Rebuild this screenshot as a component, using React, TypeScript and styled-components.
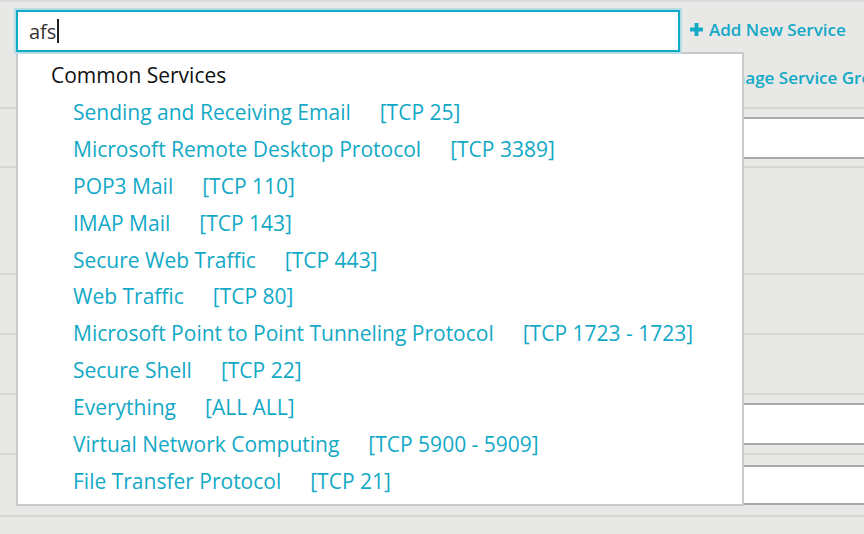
import styled, { createGlobalStyle } from 'styled-components'

const GlobalStyle = createGlobalStyle`
    html, body {
        margin: 0;
        padding: 0;
        background: #e8e8e6;
    }
    body {
        font-family: "Open Sans", Lato, sans-serif;
        overflow: hidden;
    }
`

const SPage = styled.div`
    position: relative;
    width: 864px;
    height: 534px;
    overflow: hidden;
    background: #e8e8e6;
    border-top: 2px solid #dcdcdc;
    box-sizing: border-box;
`

const SHeader = styled.div`
    height: 105px;
    display: flex;
    align-items: flex-start;
    padding: 8px 0 0 16px;
    box-sizing: border-box;
    gap: 10px;
`

const SSearchWrap = styled.div`
    position: relative;
    z-index: 3;
    width: 664px;
    flex: none;
`

const SSearch = styled.div`
    height: 42px;
    box-sizing: border-box;
    border: 2px solid #12a9c6;
    box-shadow: 0 0 0 2px #b6dce4;
    background: #fff;
    display: flex;
    align-items: center;
    padding-left: 11px;
    font-size: 20px;
    color: #333;
`

const SCaret = styled.span`
    display: inline-block;
    width: 2px;
    height: 24px;
    background: #222;
    margin-left: 1px;
`

const SActions = styled.div`
    display: flex;
    flex-direction: column;
    gap: 26px;
    padding-top: 8px;
`

const SAction = styled.a`
    display: flex;
    align-items: center;
    gap: 6px;
    color: #12a9c6;
    font-size: 17px;
    font-weight: 600;
    white-space: nowrap;
    text-decoration: none;
    height: 22px;
`

const SRow = styled.div<{ $h: number }>`
    height: ${p => p.$h}px;
    border-top: 2px solid #d6d6d5;
    display: flex;
    align-items: center;
    justify-content: flex-end;
`

const SField = styled.div<{ $h: number }>`
    width: 360px;
    height: ${p => p.$h}px;
    margin-right: -20px;
    background: #fff;
    border-top: 2px solid #a9a9a9;
    border-bottom: 2px solid #a9a9a9;
    box-sizing: border-box;
`

const SDropdown = styled.div`
    position: absolute;
    z-index: 2;
    left: 16px;
    top: 50px;
    width: 728px;
    height: 454px;
    box-sizing: border-box;
    background: #fff;
    border: 2px solid #c9c9c9;
    padding-top: 3px;
`

const SGroupTitle = styled.div`
    height: 37px;
    line-height: 37px;
    padding-left: 33px;
    font-size: 21px;
    color: #111;
`

const SOption = styled.div`
    height: 36.9px;
    line-height: 36.9px;
    padding-left: 55px;
    font-size: 21px;
    color: #12a9c6;
    white-space: nowrap;
    display: flex;
    gap: 29px;
`

const PlusIcon = () => (
    <svg width="13" height="13" viewBox="0 0 13 13">
        <rect x="4.6" y="0" width="3.8" height="13" rx="0.6" fill="#12a9c6" />
        <rect x="0" y="4.6" width="13" height="3.8" rx="0.6" fill="#12a9c6" />
    </svg>
)

const GroupIcon = () => (
    <svg width="13" height="13" viewBox="0 0 13 13">
        <rect x="0" y="1" width="13" height="3" fill="#12a9c6" />
        <rect x="0" y="5" width="13" height="3" fill="#12a9c6" />
        <rect x="0" y="9" width="13" height="3" fill="#12a9c6" />
    </svg>
)

const services = [
    ['Sending and Receiving Email', '[TCP 25]'],
    ['Microsoft Remote Desktop Protocol', '[TCP 3389]'],
    ['POP3 Mail', '[TCP 110]'],
    ['IMAP Mail', '[TCP 143]'],
    ['Secure Web Traffic', '[TCP 443]'],
    ['Web Traffic', '[TCP 80]'],
    ['Microsoft Point to Point Tunneling Protocol', '[TCP 1723 - 1723]'],
    ['Secure Shell', '[TCP 22]'],
    ['Everything', '[ALL ALL]'],
    ['Virtual Network Computing', '[TCP 5900 - 5909]'],
    ['File Transfer Protocol', '[TCP 21]'],
]

const App = () => {
    return (
        <>
            <GlobalStyle />
            <SPage>
                <SHeader>
                    <SSearchWrap>
                        <SSearch>
                            afs<SCaret />
                        </SSearch>
                    </SSearchWrap>
                    <SActions>
                        <SAction><PlusIcon />Add New Service</SAction>
                        <SAction><GroupIcon />Manage Service Groups</SAction>
                    </SActions>
                </SHeader>

                <SRow $h={57}><SField $h={42} /></SRow>
                <SRow $h={105} />
                <SRow $h={58} />
                <SRow $h={58} />
                <SRow $h={58}><SField $h={42} /></SRow>
                <SRow $h={60}><SField $h={40} /></SRow>
                <SRow $h={30} />

                <SDropdown>
                    <SGroupTitle>Common Services</SGroupTitle>
                    {services.map(([name, port]) => (
                        <SOption key={name}>
                            <span>{name}</span>
                            <span>{port}</span>
                        </SOption>
                    ))}
                </SDropdown>
            </SPage>
        </>
    )
}

export default App
